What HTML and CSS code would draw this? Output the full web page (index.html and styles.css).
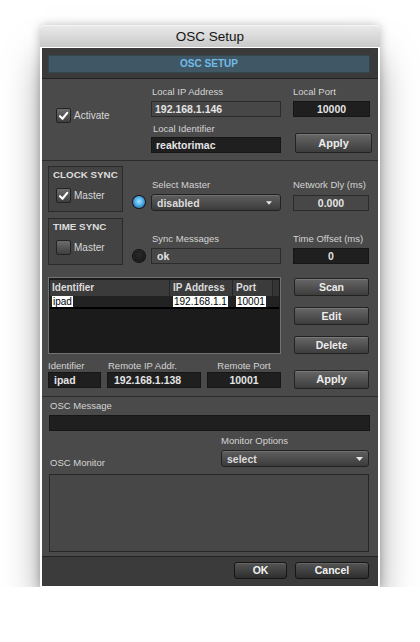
FILE: index.html
```html
<!DOCTYPE html>
<html>
<head>
<meta charset="utf-8">
<title>OSC Setup</title>
<link rel="stylesheet" href="styles.css">
</head>
<body>
<div class="window">
  <div class="titlebar">OSC Setup</div>
  <div class="frame">
    <div class="panel">
      <div class="head"><div class="head-box">OSC SETUP</div></div>

      <div class="sec1">
        <div class="c1">
          <div class="chk"><span class="cbox"><svg viewBox="0 0 14 14" width="14" height="14"><path d="M3.2 7.2 L5.9 10 L11 3.6" fill="none" stroke="#fff" stroke-width="2.3" stroke-linecap="round" stroke-linejoin="round"/></svg></span><span class="chk-lbl">Activate</span></div>
        </div>
        <div class="c2">
          <div class="lbl p1">Local IP Address</div>
          <div class="fld light">192.168.1.146</div>
          <div class="lbl p2 gap6">Local Identifier</div>
          <div class="fld dark tight">reaktorimac</div>
        </div>
        <div class="c3">
          <div class="lbl">Local Port</div>
          <div class="fld dark center">10000</div>
          <div class="btn apply1">Apply</div>
        </div>
      </div>

      <div class="sec2">
        <div class="srow rowa">
          <div class="syncbox">
            <div class="sync-title">CLOCK SYNC</div>
            <div class="chk small"><span class="cbox"><svg viewBox="0 0 14 14" width="14" height="14"><path d="M3.2 7.2 L5.9 10 L11 3.6" fill="none" stroke="#fff" stroke-width="2.3" stroke-linecap="round" stroke-linejoin="round"/></svg></span><span class="chk-lbl">Master</span></div>
          </div>
          <div class="ledcell"><span class="led blue"></span></div>
          <div class="col2">
            <div class="lbl p1">Select Master</div>
            <div class="dd dd1"><span>disabled</span><svg class="arrow" viewBox="0 0 7 4" width="6" height="4"><path d="M0 0 H7 L3.5 4 Z" fill="#e6e6e6"/></svg></div>
          </div>
          <div class="col3">
            <div class="lbl">Network Dly (ms)</div>
            <div class="fld light center">0.000</div>
          </div>
        </div>

        <div class="srow rowb">
          <div class="syncbox">
            <div class="sync-title">TIME SYNC</div>
            <div class="chk small"><span class="cbox"></span><span class="chk-lbl">Master</span></div>
          </div>
          <div class="ledcell"><span class="led black"></span></div>
          <div class="col2">
            <div class="lbl p1">Sync Messages</div>
            <div class="fld light val2">ok</div>
          </div>
          <div class="col3">
            <div class="lbl">Time Offset (ms)</div>
            <div class="fld dark center">0</div>
          </div>
        </div>

        <div class="trow">
          <div class="table">
            <div class="thead">
              <div class="th c-id">Identifier</div>
              <div class="th c-ip">IP Address</div>
              <div class="th c-port">Port</div>
              <div class="th c-sc"></div>
            </div>
            <div class="tr">
              <div class="td c-id"><span class="sel">ipad</span></div>
              <div class="td c-ip"><span class="sel">192.168.1.1</span></div>
              <div class="td c-port"><span class="sel">10001</span></div>
              <div class="td c-sc"></div>
            </div>
          </div>
          <div class="btncol">
            <div class="btn">Scan</div>
            <div class="btn">Edit</div>
            <div class="btn">Delete</div>
          </div>
        </div>

        <div class="brow">
          <div class="bf bf1">
            <div class="lbl">Identifier</div>
            <div class="fld dark val3">ipad</div>
          </div>
          <div class="bf bf2">
            <div class="lbl p1">Remote IP Addr.</div>
            <div class="fld dark val4">192.168.1.138</div>
          </div>
          <div class="bf bf3">
            <div class="lbl center">Remote Port</div>
            <div class="fld dark center">10001</div>
          </div>
          <div class="btn apply2">Apply</div>
        </div>
      </div>

      <div class="sec4">
        <div class="lbl p1">OSC Message</div>
        <div class="fld dark msg"></div>
        <div class="mrow">
          <div class="lbl p1 monlbl">OSC Monitor</div>
          <div class="mopts">
            <div class="lbl">Monitor Options</div>
            <div class="dd dd2"><span>select</span><svg class="arrow" viewBox="0 0 7 4" width="7" height="4"><path d="M0 0 H7 L3.5 4 Z" fill="#e6e6e6"/></svg></div>
          </div>
        </div>
        <div class="monitor"></div>
      </div>

      <div class="footer">
        <div class="fbtn ok">OK</div>
        <div class="fbtn cancel">Cancel</div>
      </div>
    </div>
  </div>
</div>
</body>
</html>
```

FILE: styles.css
```css
* { box-sizing: border-box; }

body {
  margin: 0;
  background: #ffffff;
  font-family: "Liberation Sans", Arial, sans-serif;
}

.window {
  width: 340px;
  margin: 25px 0 0 40px;
  border-radius: 5px 5px 0 0;
  box-shadow: 0 28px 36px -6px rgba(0,0,0,0.5), 0 0 10px rgba(0,0,0,0.25);
}

.titlebar {
  height: 22px;
  border-radius: 5px 5px 0 0;
  background: linear-gradient(#e9e9e9, #c9c9c9);
  border-top: 1px solid #f6f6f6;
  text-align: center;
  font-size: 13.5px;
  line-height: 21px;
  color: #141414;
}

.frame {
  background: #ffffff;
  padding: 1px 2px 1px 2px;
}

.panel {
  background: #4a4a4a;
  height: 538px;
  display: flex;
  flex-direction: column;
  color: #d6d6d6;
}

/* header */
.head {
  height: 31px;
  background: #3a3a3a;
  border-bottom: 1px solid #222;
  padding: 7px 8px 0 6px;
}
.head-box {
  height: 18px;
  background: #405866;
  border: 1px solid #33454f;
  color: #71bde6;
  font-size: 10px;
  font-weight: bold;
  text-align: center;
  line-height: 16px;
}

/* generic */
.lbl {
  font-size: 9.5px;
  line-height: 12px;
  height: 12px;
  color: #d4d4d4;
  white-space: nowrap;
}
.lbl.p1 { padding-left: 1px; }
.lbl.p2 { padding-left: 2px; }
.lbl.center { text-align: center; }

.fld {
  height: 16px;
  border: 1px solid #2a2a2a;
  font-size: 10.5px;
  font-weight: bold;
  line-height: 14px;
  color: #e4e4e4;
  padding-left: 3px;
  white-space: nowrap;
  overflow: hidden;
}
.fld.light { background: #474747; border-color: #2b2b2b; }
.fld.dark { background: #1f1f1f; border-color: #161616; }
.fld.center { text-align: center; padding-left: 0; }
.fld.tight { padding-left: 4px; }

.btn {
  height: 18px;
  border: 1px solid #222;
  border-radius: 2px;
  background: linear-gradient(#676767, #3d3d3d);
  box-shadow: inset 0 1px 0 rgba(255,255,255,0.12);
  color: #ececec;
  font-size: 10.5px;
  font-weight: bold;
  line-height: 16px;
  text-align: center;
}

.chk {
  display: flex;
  align-items: center;
}
.cbox {
  width: 15px;
  height: 15px;
  border: 1px solid #222;
  border-radius: 2px;
  background: linear-gradient(#6c6c6c, #3e3e3e);
  display: flex;
  align-items: center;
  justify-content: center;
}
.cbox svg { display: block; }
.chk-lbl {
  margin-left: 3px;
  font-size: 10px;
  color: #d8d8d8;
}

/* section 1 */
.sec1 {
  height: 82px;
  border-bottom: 1px solid #2c2c2c;
  padding: 7px 0 0 6px;
  display: flex;
}
.c1 { width: 103px; padding: 22px 0 0 8px; }
.c2 { width: 130px; display: flex; flex-direction: column; }
.c2 .lbl.gap6 { margin-top: 6px; }
.c2 .fld { margin-top: 3px; }
.c2 .fld.tight { margin-top: 2px; }
.c3 { width: 77px; margin-left: 12px; display: flex; flex-direction: column; }
.c3 .fld { margin-top: 3px; }
.apply1 { height: 20px; line-height: 18px; margin-top: 16px; margin-left: 2px; width: 77px; font-size: 11px; }

/* section 2 + 3 */
.sec2 {
  height: 236px;
  border-bottom: 1px solid #2c2c2c;
  padding: 5px 0 0 6px;
}
.srow { display: flex; align-items: flex-end; }
.rowa { height: 46px; }
.rowb { height: 47px; margin-top: 6px; }
.syncbox {
  width: 75px;
  height: 100%;
  align-self: stretch;
  border: 1px solid #2a2a2a;
  background: #434343;
  padding: 2px 0 0 0;
}
.sync-title {
  font-size: 9.8px;
  font-weight: bold;
  line-height: 12px;
  padding-left: 4px;
  color: #dedede;
}
.chk.small { margin-top: 7px; padding-left: 7px; }
.ledcell { width: 28px; padding-left: 10px; }
.led {
  display: block;
  width: 12px;
  height: 12px;
  border-radius: 50%;
}
.rowa .ledcell { padding-bottom: 4px; }
.rowb .ledcell { padding-bottom: 3px; }
.led.blue {
  background: radial-gradient(circle at 50% 45%, #a8e0ff 0, #4fb0ea 45%, #2b78b0 75%, #111 100%);
  box-shadow: 0 0 0 1px #151515;
}
.led.black {
  background: radial-gradient(circle at 50% 40%, #2a2a2a, #141414);
  box-shadow: 0 0 0 1px #111;
}
.col2 { width: 130px; padding-bottom: 1px; }
.col3 { width: 76px; margin-left: 12px; padding-bottom: 1px; }
.col2 .fld, .col3 .fld { margin-top: 3px; }
.rowa .col3 .fld { margin-top: 4px; }
.fld.val2 { padding-left: 5px; }

.dd {
  height: 17px;
  margin-top: 3px;
  border: 1px solid #222;
  border-radius: 3px;
  background: linear-gradient(#5f5f5f, #3b3b3b);
  box-shadow: inset 0 1px 0 rgba(255,255,255,0.1);
  display: flex;
  align-items: center;
  justify-content: space-between;
  padding: 0 7px 0 5px;
  font-size: 10.5px;
  font-weight: bold;
  color: #dcdcdc;
}
.dd1 .arrow { margin-right: 1px; }

.trow { display: flex; margin-top: 12px; height: 77px; }
.table {
  width: 233px;
  height: 77px;
  border: 1px solid #727272;
  background: #1b1b1b;
  padding: 1px;
}
.thead {
  display: flex;
  height: 16px;
  margin-top: 1px;
  background: #3b3b3b;
}
.th {
  font-size: 10px;
  font-weight: bold;
  line-height: 15px;
  color: #dcdcdc;
  border-right: 1px solid #262626;
  white-space: nowrap;
  overflow: hidden;
}
.c-id { width: 120px; padding-left: 2px; }
.c-ip { width: 63px; padding-left: 3px; }
.c-port { width: 40px; padding-left: 3px; }
.c-sc { flex: 1; border-right: 0; }
.thead .c-sc { background: #353535; }
.tr {
  display: flex;
  height: 13px;
  background: #222;
  border-bottom: 2px solid #000;
}
.td {
  white-space: nowrap;
  overflow: hidden;
  font-size: 10px;
  line-height: 11px;
  color: #000;
}
.td.c-ip { padding-left: 3px; }
.td.c-port { padding-left: 3px; }
.sel { background: #fff; padding: 0 1px; }
.btncol {
  width: 75px;
  margin-left: 13px;
  padding-top: 1px;
  display: flex;
  flex-direction: column;
  gap: 11px;
}

.brow { display: flex; margin-top: 6px; height: 29px; }
.bf { display: flex; flex-direction: column; }
.bf1 { width: 53px; }
.bf2 { width: 94px; margin-left: 6px; }
.bf3 { width: 74px; margin-left: 6px; }
.fld.val3 { padding-left: 5px; }
.fld.val4 { padding-left: 6px; }
.apply2 { width: 75px; height: 19px; line-height: 17px; margin-left: 13px; margin-top: 10px; font-size: 11px; }

/* section 4 */
.sec4 {
  height: 160px;
  border-bottom: 1px solid #222;
  padding: 3px 0 0 7px;
}
.fld.msg { width: 321px; margin-top: 3px; }
.mrow {
  display: flex;
  justify-content: space-between;
  align-items: flex-end;
  width: 320px;
  height: 33px;
  margin-top: 5px;
}
.mopts { width: 148px; padding-bottom: 2px; }
.dd2 { padding: 0 5px 0 5px; }
.monitor {
  width: 320px;
  height: 78px;
  margin-top: 5px;
  background: #474747;
  border: 1px solid #262626;
}

/* footer */
.footer {
  height: 29px;
  background: #3b3b3b;
  display: flex;
  justify-content: flex-end;
  padding: 5px 9px 0 0;
  gap: 8px;
}
.fbtn {
  height: 17px;
  border: 1px solid #161616;
  border-radius: 3px;
  background: linear-gradient(#555, #2e2e2e);
  box-shadow: inset 0 1px 0 rgba(255,255,255,0.1);
  color: #f2f2f2;
  font-size: 10.5px;
  font-weight: bold;
  line-height: 15px;
  text-align: center;
}
.fbtn.ok { width: 53px; }
.fbtn.cancel { width: 74px; }
```
